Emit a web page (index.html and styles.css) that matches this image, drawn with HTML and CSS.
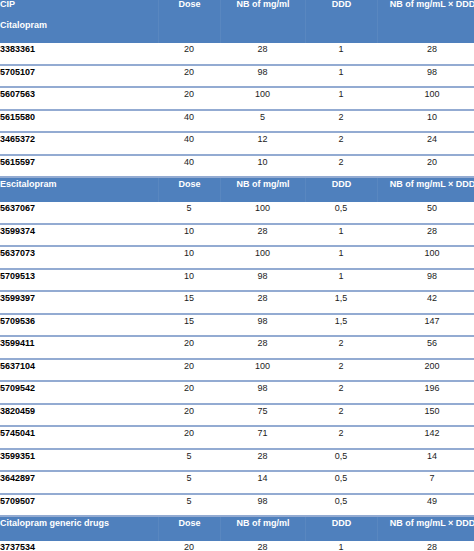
FILE: index.html
```html
<!DOCTYPE html>
<html lang="en">
<head>
    <meta charset="UTF-8">
    <title>CIP dose table</title>
    <link rel="stylesheet" href="styles.css">
</head>
<body>
    <div class="tbl">
        <!-- 첫번째 그룹 : Citalopram -->
        <div class="row band top">
            <div class="c">CIP</div><div class="c">Dose</div><div class="c">NB of mg/ml</div><div class="c">DDD</div><div class="c">NB of mg/mL × DDD</div>
        </div>
        <div class="row band">
            <div class="c">Citalopram</div><div class="c"></div><div class="c"></div><div class="c"></div><div class="c"></div>
        </div>
        <div class="row"><div class="c">3383361</div><div class="c">20</div><div class="c">28</div><div class="c">1</div><div class="c">28</div></div>
        <div class="row"><div class="c">5705107</div><div class="c">20</div><div class="c">98</div><div class="c">1</div><div class="c">98</div></div>
        <div class="row"><div class="c">5607563</div><div class="c">20</div><div class="c">100</div><div class="c">1</div><div class="c">100</div></div>
        <div class="row"><div class="c">5615580</div><div class="c">40</div><div class="c">5</div><div class="c">2</div><div class="c">10</div></div>
        <div class="row"><div class="c">3465372</div><div class="c">40</div><div class="c">12</div><div class="c">2</div><div class="c">24</div></div>
        <div class="row"><div class="c">5615597</div><div class="c">40</div><div class="c">10</div><div class="c">2</div><div class="c">20</div></div>

        <!-- 두번째 그룹 : Escitalopram -->
        <div class="row band">
            <div class="c">Escitalopram</div><div class="c">Dose</div><div class="c">NB of mg/ml</div><div class="c">DDD</div><div class="c">NB of mg/mL × DDD</div>
        </div>
        <div class="row"><div class="c">5637067</div><div class="c">5</div><div class="c">100</div><div class="c">0,5</div><div class="c">50</div></div>
        <div class="row"><div class="c">3599374</div><div class="c">10</div><div class="c">28</div><div class="c">1</div><div class="c">28</div></div>
        <div class="row"><div class="c">5637073</div><div class="c">10</div><div class="c">100</div><div class="c">1</div><div class="c">100</div></div>
        <div class="row"><div class="c">5709513</div><div class="c">10</div><div class="c">98</div><div class="c">1</div><div class="c">98</div></div>
        <div class="row"><div class="c">3599397</div><div class="c">15</div><div class="c">28</div><div class="c">1,5</div><div class="c">42</div></div>
        <div class="row"><div class="c">5709536</div><div class="c">15</div><div class="c">98</div><div class="c">1,5</div><div class="c">147</div></div>
        <div class="row"><div class="c">3599411</div><div class="c">20</div><div class="c">28</div><div class="c">2</div><div class="c">56</div></div>
        <div class="row"><div class="c">5637104</div><div class="c">20</div><div class="c">100</div><div class="c">2</div><div class="c">200</div></div>
        <div class="row"><div class="c">5709542</div><div class="c">20</div><div class="c">98</div><div class="c">2</div><div class="c">196</div></div>
        <div class="row"><div class="c">3820459</div><div class="c">20</div><div class="c">75</div><div class="c">2</div><div class="c">150</div></div>
        <div class="row"><div class="c">5745041</div><div class="c">20</div><div class="c">71</div><div class="c">2</div><div class="c">142</div></div>
        <div class="row"><div class="c">3599351</div><div class="c">5</div><div class="c">28</div><div class="c">0,5</div><div class="c">14</div></div>
        <div class="row"><div class="c">3642897</div><div class="c">5</div><div class="c">14</div><div class="c">0,5</div><div class="c">7</div></div>
        <div class="row"><div class="c">5709507</div><div class="c">5</div><div class="c">98</div><div class="c">0,5</div><div class="c">49</div></div>

        <!-- 세번째 그룹 : 제네릭 -->
        <div class="row band">
            <div class="c">Citalopram generic drugs</div><div class="c">Dose</div><div class="c">NB of mg/ml</div><div class="c">DDD</div><div class="c">NB of mg/mL × DDD</div>
        </div>
        <div class="row last"><div class="c">3737534</div><div class="c">20</div><div class="c">28</div><div class="c">1</div><div class="c">28</div></div>
    </div>
</body>
</html>
```

FILE: styles.css
```css
html, body{
    margin: 0;
    overflow: hidden;
    background: #fff;
}

body{
    font-family: "Liberation Sans", Arial, sans-serif;
    font-size: 9px;
    color: #1c1c1c;
}

/* 표 전체 - 화면보다 조금 넓음 */
.tbl{
    width: 487px;
    margin-top: -2px;
}

/* 한줄 */
.row{
    display: grid;
    grid-template-columns: 158px 62px 85px 72px 110px;
    height: 22.5px;
    box-sizing: border-box;
    border-bottom: 2px solid #93abd2;
}

/* 마지막 줄은 화면 아래로 잘림 */
.row.last{
    height: 14px;
    border-bottom: 0;
}

.c{
    line-height: 10px;
    padding-top: 1px;
    text-align: center;
    white-space: nowrap;
}

/* 첫번째 칸 CIP 번호 */
.c:first-child{
    text-align: left;
    font-weight: bold;
    color: #000;
}

/* 파란 머리줄 */
.band{
    height: 24px;
    background-color: #4f80bd;
    border-bottom: 0;
    color: #fff;
    font-weight: bold;
}

.band .c{
    padding-top: 1px;
    color: #fff;
}

.band .c + .c{
    border-left: 1px solid rgba(255, 255, 255, .06);
}

/* 맨위 머리줄은 위가 잘려있음 */
.band.top{
    height: 21px;
}
```
